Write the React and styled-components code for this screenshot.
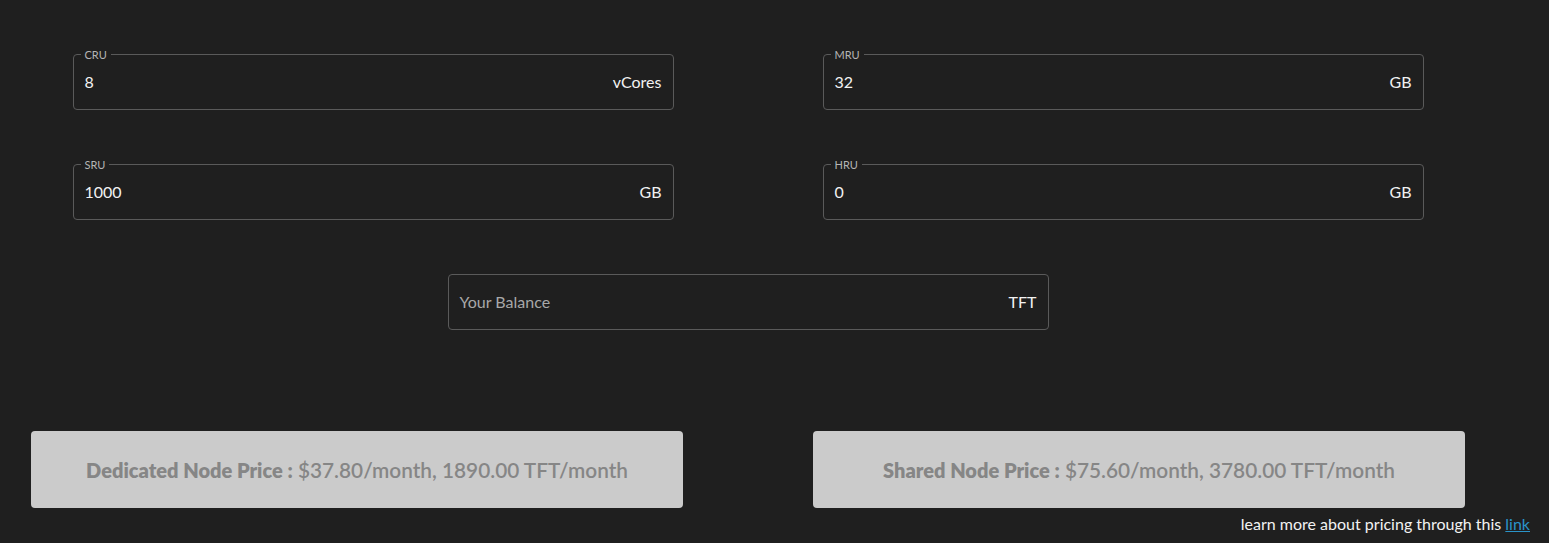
import styled, { createGlobalStyle } from 'styled-components';

const GlobalStyle = createGlobalStyle`
  body {
    margin: 0;
    background: #1f1f1f;
    font-family: Lato, 'Open Sans', sans-serif;
  }
`;

const fields = [
  { label: 'CRU', value: '8', unit: 'vCores' },
  { label: 'MRU', value: '32', unit: 'GB' },
  { label: 'SRU', value: '1000', unit: 'GB' },
  { label: 'HRU', value: '0', unit: 'GB' },
];

const Field = ({ label, value, unit, placeholder }) => (
  <FieldBox>
    {label && <Legend>{label}</Legend>}
    <Value $placeholder={!value}>{value || placeholder}</Value>
    <Unit>{unit}</Unit>
  </FieldBox>
);

const App = () => (
  <>
    <GlobalStyle />
    <Page>
      <Grid>
        {fields.map((f) => (
          <Field key={f.label} {...f} />
        ))}
      </Grid>
      <Balance>
        <Field placeholder='Your Balance' unit='TFT' />
      </Balance>
      <Prices>
        <PriceCard>
          <b>Dedicated Node Price :</b> $37.80/month, 1890.00 TFT/month
        </PriceCard>
        <PriceCard>
          <b>Shared Node Price :</b> $75.60/month, 3780.00 TFT/month
        </PriceCard>
      </Prices>
    </Page>
    <Footer>
      learn more about pricing through this <a href='#'>link</a>
    </Footer>
  </>
);

const Page = styled.div`
  width: 1496px;
  padding-top: 54px;
`;

const Grid = styled.div`
  display: grid;
  grid-template-columns: 601px 601px;
  column-gap: 149px;
  row-gap: 54px;
  justify-content: center;
`;

const FieldBox = styled.div`
  position: relative;
  box-sizing: border-box;
  height: 56px;
  border: 1px solid #5a5a5a;
  border-radius: 4px;
  display: flex;
  align-items: center;
  justify-content: space-between;
  padding: 0 11px 1px;
  font-size: 16px;
  color: #fff;
`;

const Legend = styled.span`
  position: absolute;
  top: -6px;
  left: 7px;
  padding: 0 4px;
  background: #1f1f1f;
  font-size: 11px;
  line-height: 12px;
  color: #b5b5b5;
`;

const Value = styled.span`
  color: ${({ $placeholder }) => ($placeholder ? '#a8a8a8' : '#f2f2f2')};
`;

const Unit = styled.span`
  color: #f2f2f2;
`;

const Balance = styled.div`
  width: 601px;
  margin: 54px auto 0;
`;

const Prices = styled.div`
  display: flex;
  justify-content: center;
  gap: 130px;
  margin-top: 101px;
`;

const PriceCard = styled.div`
  width: 652px;
  height: 77px;
  border-radius: 4px;
  background: #cbcbcb;
  color: #868686;
  font-size: 20.8px;
  font-weight: 600;
  display: flex;
  align-items: center;
  justify-content: center;
  white-space: pre;

  b {
    font-size: 20px;
    font-weight: 800;
  }
`;

const Footer = styled.div`
  text-align: right;
  padding-right: 19px;
  margin-top: 6px;
  font-size: 16px;
  color: #f2f2f2;

  a {
    color: #2a94c9;
  }
`;

export default App;
